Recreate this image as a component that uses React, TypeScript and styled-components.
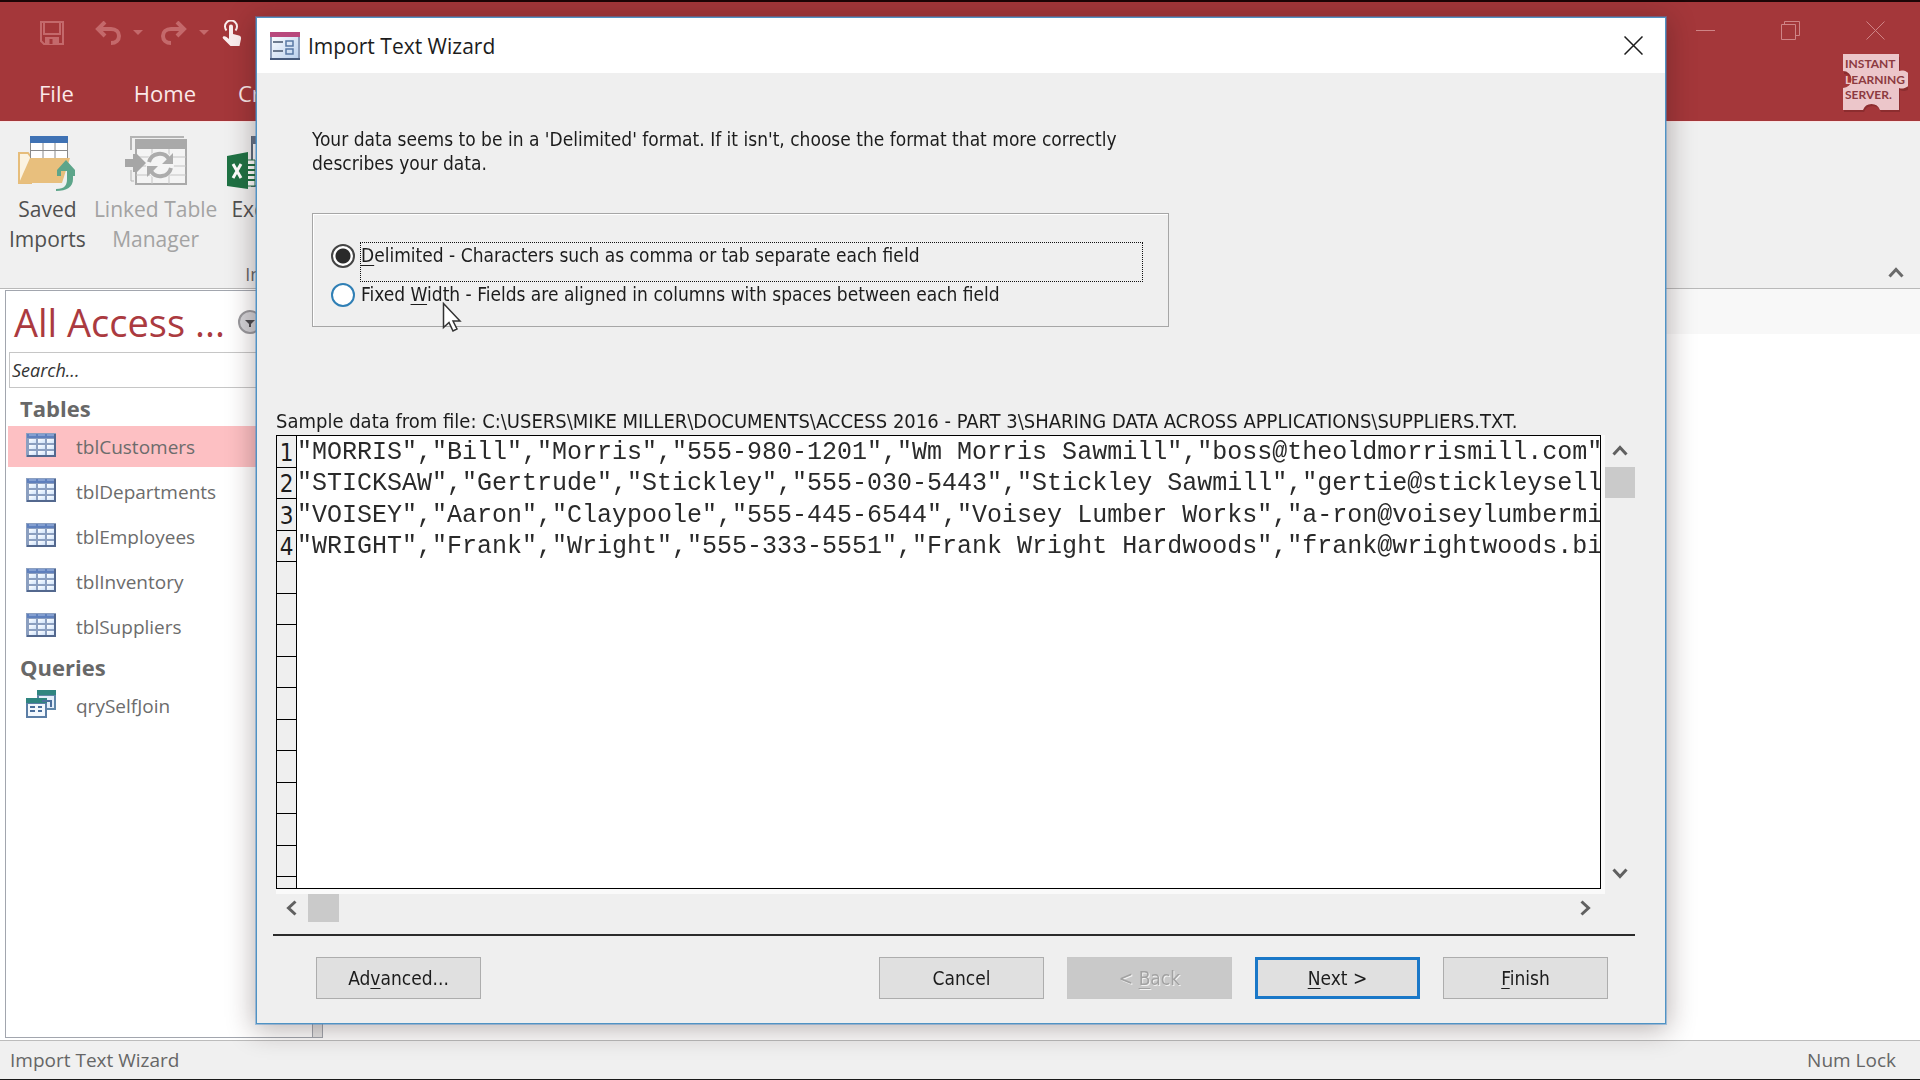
import React, { useState } from "react";
import styled, { createGlobalStyle } from "styled-components";

const red = "#a4373a";
const face = "#efefef";
const segoe = `"Open Sans", "Noto Sans", sans-serif`;
const tahoma = `"DejaVu Sans Condensed", "Noto Sans", sans-serif`;
const courier = `"Liberation Mono", monospace`;

const GlobalStyle = createGlobalStyle`
  *, *::before, *::after { box-sizing: border-box; }
  body { margin: 0; font-family: ${segoe}; font-size: 19px; color: #444; background: #fff; }
  button, input { font: inherit; color: inherit; }
  button { padding: 0; border: 0; background: none; }
  svg { display: block; flex: none; }
`;

/* ---------- application shell ---------- */

const Shell = styled.div`
  display: flex;
  flex-direction: column;
  height: 100vh;
  overflow: hidden;
  border-top: 2px solid #1c0506;
  border-bottom: 1px solid #1a1a1a;
`;

const Header = styled.header`
  display: flex;
  justify-content: space-between;
  background: ${red};
  height: 119px;
  flex: none;
`;

const HeaderLeft = styled.div`
  display: flex;
  flex-direction: column;
  justify-content: space-between;
`;

const QuickAccess = styled.div`
  display: flex;
  align-items: center;
  padding: 18px 0 0 40px;
  color: #c4696b;
`;

const QuickButton = styled.button<{ $gap: number; $active?: boolean }>`
  margin-right: ${(p) => p.$gap}px;
  color: ${(p) => (p.$active ? "#fbeeee" : "inherit")};
`;

const TabStrip = styled.nav`
  display: flex;
  gap: 42px;
  padding-left: 39px;
`;

const Tab = styled.button<{ $file?: boolean }>`
  height: 56px;
  padding-right: ${(p) => (p.$file ? 18 : 0)}px;
  font-size: 22px;
  line-height: 56px;
  color: #fbe9e9;
`;

const HeaderRight = styled.div`
  display: flex;
  flex-direction: column;
  align-items: flex-end;
  gap: 13px;
  padding: 19px 12px 0 0;
`;

const WindowButtons = styled.div`
  display: flex;
  gap: 66px;
  padding-right: 23px;
  color: #cf8486;
`;

const Ribbon = styled.section`
  display: flex;
  justify-content: space-between;
  height: 168px;
  flex: none;
  background: #f0f0f0;
  border-top: 1px solid #fbe6e6;
  border-bottom: 1px solid #b9b9b9;
`;

const RibbonGroup = styled.div`
  display: flex;
  padding: 14px 0 0 9px;
  gap: 8px;
`;

const RibbonButton = styled.button<{ $off?: boolean }>`
  display: flex;
  flex-direction: column;
  align-items: center;
  justify-content: flex-start;
  gap: 3px;
  font-size: 21px;
  line-height: 30px;
  color: ${(p) => (p.$off ? "#a3a3a3" : "#505050")};
`;

const ExportColumn = styled.div`
  display: flex;
  flex-direction: column;
  align-items: flex-start;
  justify-content: space-between;
  padding-left: 2px;
`;

const GroupLabel = styled.span`
  padding-left: 18px;
  font-size: 18px;
  line-height: 28px;
  color: #666;
`;

const CollapseButton = styled.button`
  align-self: flex-end;
  padding: 0 16px 7px 0;
  color: #6a6a6a;
`;

/* ---------- navigation pane ---------- */

const Workspace = styled.div`
  display: flex;
  flex: 1;
  min-height: 0;
`;

const Pane = styled.aside`
  display: flex;
  flex-direction: column;
  width: 308px;
  margin: 1px 0 2px 5px;
  border: 1px solid #a2a6ae;
  background: #fff;
`;

const PaneHead = styled.div`
  display: flex;
  align-items: center;
  justify-content: space-between;
  height: 61px;
  padding: 0 49px 0 8px;
`;

const PaneTitle = styled.h1`
  margin: 0;
  font-size: 38px;
  line-height: 60px;
  font-weight: 400;
  color: #ab3a40;
`;

const Search = styled.input`
  height: 36px;
  margin: 0 4px 0 3px;
  padding: 0 2px;
  border: 1px solid #c6c6c6;
  font-size: 18px;
  font-style: italic;
  &::placeholder { color: #333; opacity: 1; }
`;

const GroupTitle = styled.h2`
  margin: 0;
  padding: 3px 0 0 14px;
  height: 38px;
  font-size: 22px;
  line-height: 34px;
  font-weight: 700;
  color: #686868;
`;

const ObjectList = styled.ul`
  display: flex;
  flex-direction: column;
  gap: 4px;
  margin: 0;
  padding: 0 2px;
  list-style: none;
`;

const ObjectItem = styled.button<{ $selected?: boolean }>`
  display: flex;
  align-items: center;
  gap: 20px;
  width: 100%;
  height: 41px;
  padding-left: 18px;
  color: #6c6c6c;
  background: ${(p) => (p.$selected ? "#fdc0c3" : "transparent")};
  svg { margin-bottom: 4px; }
`;

const Splitter = styled.div`
  width: 10px;
  margin: 1px 0 2px;
  background: #e6e6e6;
  border: 1px solid #a2a6ae;
  border-left: 0;
`;

const Documents = styled.main`
  flex: 1;
  background: linear-gradient(#f8f8f8 45px, #fff 45px);
`;

const StatusBar = styled.footer`
  display: flex;
  align-items: center;
  justify-content: space-between;
  height: 39px;
  flex: none;
  padding: 0 24px 0 10px;
  border-top: 1px solid #bcbcbc;
  background: #f0f0f0;
  color: #666;
`;

/* ---------- wizard dialog ---------- */

const Dialog = styled.section`
  position: fixed;
  inset: 17px 254px 56px 256px;
  display: flex;
  flex-direction: column;
  border: 1px solid #4f93c4;
  background: ${face};
  box-shadow: 0 0 0 1px rgba(80, 140, 200, 0.45), 0 4px 26px 2px rgba(40, 20, 20, 0.32);
  font-family: ${tahoma};
  font-size: 19px;
  line-height: 24px;
  color: #1c1c1c;
`;

const DialogTitle = styled.header`
  display: flex;
  align-items: center;
  gap: 8px;
  height: 55px;
  flex: none;
  padding: 0 22px 0 13px;
  background: #fff;
  font-family: ${segoe};
`;

const DialogName = styled.h2`
  flex: 1;
  margin: 0;
  font-size: 21px;
  font-weight: 400;
`;

const DialogBody = styled.div`
  display: flex;
  flex-direction: column;
  flex: 1;
  min-height: 0;
  padding: 54px 30px 24px 16px;
`;

const Intro = styled.p`
  max-width: 840px;
  margin: 0 0 38px 39px;
`;

const Options = styled.fieldset`
  width: 857px;
  max-width: 100%;
  height: 114px;
  margin: 0 0 82px 39px;
  padding: 28px 25px 0 18px;
  border: 1px solid #a6a6a6;
  box-shadow: inset 1px 1px 0 #fff;
`;

const Option = styled.div`
  display: flex;
  align-items: flex-start;
  gap: 5px;
  height: 39px;
`;

const Radio = styled.input`
  appearance: none;
  width: 24px;
  height: 24px;
  margin: 2px 0 0;
  border: 2px solid #2f7fb5;
  border-radius: 50%;
  background: #fff;
  &:checked {
    border-color: #444;
    background: radial-gradient(circle, #2a2a2a 0 7px, #fff 8px);
  }
`;

const OptionLabel = styled.label<{ $focused: boolean }>`
  flex: 1;
  height: 40px;
  border: 1px dotted ${(p) => (p.$focused ? "#111" : "transparent")};
`;

const Key = styled.u`
  text-decoration-thickness: 1px;
  text-underline-offset: 3px;
`;

const SampleLabel = styled.div`
  margin-left: 3px;
  padding-bottom: 2px;
  font-size: 20px;
  white-space: nowrap;
`;

const Preview = styled.div`
  display: grid;
  grid-template: minmax(0, 1fr) 28px / minmax(0, 1fr) 30px;
  flex: 1;
  min-height: 0;
  margin-left: 3px;
`;

const SheetFrame = styled.div`
  display: flex;
  min-height: 0;
  padding: 0 4px 5px 0;
  background: #fafafa;
`;

const Sheet = styled.div`
  flex: 1;
  min-width: 0;
  overflow: hidden;
  border: 1px solid #000;
  background: #fff;
`;

const Table = styled.table`
  width: 100%;
  table-layout: fixed;
  border-spacing: 0;
`;

const Row = styled.tr`
  height: 32px;
  &:nth-child(even) { height: 31px; }
`;

const RowNumber = styled.th`
  width: 20px;
  padding: 2px 0 0;
  border-right: 1px solid #000;
  border-bottom: 1px solid #000;
  background: ${face};
  font-size: 24px;
  line-height: 28px;
  font-weight: 400;
`;

const RowText = styled.td`
  padding: 1px 0 0;
  overflow: hidden;
  font-family: ${courier};
  font-size: 25px;
  line-height: 28px;
  white-space: pre;
  color: #2a2a2a;
`;

const ScrollBar = styled.div<{ $across?: boolean }>`
  display: flex;
  flex-direction: ${(p) => (p.$across ? "row" : "column")};
  padding: ${(p) => (p.$across ? "0 4px 0 0" : "0 0 5px")};
`;

const ScrollArrow = styled.button`
  display: grid;
  place-items: center;
  flex: 0 0 32px;
  color: #606060;
`;

const Thumb = styled.div`
  flex: 0 0 31px;
  background: #cacaca;
`;

const Track = styled.div`
  flex: 1;
`;

const Rule = styled.hr`
  width: 100%;
  height: 2px;
  margin: 12px 0 21px;
  border: 0;
  background: #2b2b2b;
`;

const Actions = styled.div`
  display: flex;
  justify-content: space-between;
  padding: 0 27px 0 43px;
`;

const ActionGroup = styled.div`
  display: flex;
  gap: 23px;
`;

const ActionButton = styled.button<{ $primary?: boolean }>`
  width: 165px;
  height: 42px;
  border: ${(p) => (p.$primary ? "3px solid #1a78c8" : "1px solid #adadad")};
  background: #e0e0e0;
  &:disabled {
    border-color: #c8c8c8;
    background: #c9c9c9;
    color: #a2a2a2;
    text-shadow: 1px 1px 0 #f2f2f2;
  }
`;

const Pointer = styled.div`
  position: fixed;
  left: 442px;
  top: 302px;
  pointer-events: none;
`;

/* ---------- drawings ---------- */

const SaveIcon = () => (
  <svg width="24" height="24" viewBox="0 0 24 24" fill="none" stroke="currentColor" strokeWidth="2">
    <path d="M1 1h22v22H4l-3-3z" />
    <path d="M4 2v11h16V2" />
    <path d="M6 23v-6h12v6z" fill="currentColor" />
    <path d="M11 18v5" stroke={red} strokeWidth="3" />
  </svg>
);

const UndoIcon = ({ flip }: { flip?: boolean }) => (
  <svg width="27" height="24" viewBox="0 0 27 24" fill="none" stroke="currentColor" strokeWidth="4">
    <g transform={flip ? "matrix(-1 0 0 1 27 0)" : undefined}>
      <path d="M10 1 3 8l7 7M3 8h13c5 0 8 3 8 7 0 4-3 7-8 7" />
    </g>
  </svg>
);

const CaretIcon = () => (
  <svg width="10" height="6" viewBox="0 0 10 6" fill="currentColor">
    <path d="M0 0h10L5 5z" />
  </svg>
);

const TouchIcon = () => (
  <svg width="20" height="26" viewBox="0 0 20 26" fill="currentColor">
    <path d="M4.500 10.500A6 6 0 1 1 13.500 10.500" fill="none" stroke="currentColor" strokeWidth="2" />
    <path d="M7 6.500a2 2 0 0 1 4 0V14l6 1.500q2.500.8 2 3.500l-1.500 7H8.500L1 18.500q-1-1.500.5-2.200 1.500-.5 3 .7L7 19z" />
  </svg>
);

const MinimizeIcon = () => (
  <svg width="19" height="19" viewBox="0 0 19 19" stroke="currentColor"><path d="M0 9.500h19" /></svg>
);

const RestoreIcon = () => (
  <svg width="19" height="19" viewBox="0 0 19 19" fill="none" stroke="currentColor">
    <path d="M.5 3.500h14v15H.5zM3.500 3V.5h15v14H15" />
  </svg>
);

const CloseIcon = ({ weight = 1 }: { weight?: number }) => (
  <svg width="19" height="19" viewBox="0 0 19 19" fill="none" stroke="currentColor" strokeWidth={weight}>
    <path d="m.5.5 18 18M18.500.5l-18 18" />
  </svg>
);

const Logo = () => (
  <svg width="69" height="62" viewBox="0 0 69 62" fontFamily="Lato, sans-serif" fontSize="12" fontWeight="700" fill="#8c3a40">
    <path
      d="M4 2h56v17a9 9 0 1 1 0 16v22H41a9 9 0 0 0-17 0H4V36a8.500 8.500 0 0 0 0-17z"
      fill="#6f2124"
      opacity=".45"
      transform="translate(1 2)"
    />
    <path d="M4 1h56v17a9 9 0 1 1 0 17v22H41a9 9 0 0 0-17 0H4V35a8.500 8.500 0 0 0 0-17z" fill="#ecc6ca" />
    <text x="6" y="15">INSTANT</text>
    <text x="6" y="31"><tspan fill="#ecc6ca">L</tspan>EARNING</text>
    <text x="6" y="46">SERVER.</text>
  </svg>
);

const SavedImportsIcon = () => (
  <svg width="58" height="55" viewBox="0 0 58 55">
    <path d="M1 17h9l3 4v26H1z" fill="#fbf3e2" stroke="#e6bd7b" strokeWidth="2" />
    <path d="M12 1h38v24H12z" fill="#fff" />
    <path d="M12 0h38v7H12z" fill="#3f72b4" />
    <path d="M12.500 7v17M25 7v17M37 7v17M49.500 7v17M12 14.500h38" stroke="#8a8a8a" fill="none" />
    <path d="M12 22h40L44 47H1z" fill="#e8bf7d" />
    <path d="M38 53c9 0 11-4 11-10V35h-6v5h-4v-6l9-10 9 10v6h-3v-4h1v7c0 8-6 12-17 12z" fill="#5da58a" />
  </svg>
);

const LinkedTableIcon = () => (
  <svg width="62" height="55" viewBox="0 0 62 55" fill="none">
    <path d="M6 14V1h53" stroke="#b4b4b4" strokeWidth="2" />
    <path d="M6 34v11h3" stroke="#b4b4b4" />
    <path d="M11 4h50v44H11z" fill="#f4f4f4" stroke="#aaa" strokeWidth="2" />
    <path d="M10 4h52v9H10z" fill="#a9a9a9" />
    <path d="M11 21h50M11 30h50M11 39h50M27 13v35M44 13v35" stroke="#c4c4c4" />
    <path d="M0 23h8v-5h4l9 9-9 9H8v-5H0z" fill="#a6a6a6" />
    <circle cx="35" cy="29" r="14" fill="#f4f4f4" />
    <path d="M24 26a11 11 0 0 1 20-3M46 32a11 11 0 0 1-20 3" stroke="#acacac" strokeWidth="4" />
    <path d="M48 17v11H37zM22 41V30h11z" fill="#acacac" />
  </svg>
);

const ExcelIcon = () => (
  <svg width="58" height="55" viewBox="0 0 58 55">
    <path d="M25 0h30v50H25z" fill="#fff" stroke="#5d6b7d" strokeWidth="2" />
    <path d="M25 0h30v8H25z" fill="#66758a" />
    <path d="M20 24h8v26h-8z" fill="#fff" stroke="#1f7244" />
    <path d="M20 29h8M20 34h8M20 39h8M20 44h8" stroke="#1f7244" strokeWidth="2" />
    <path d="m0 20 21-4v37L0 50z" fill="#1f7244" />
    <path d="m6 28 8 14M14 28 6 42" stroke="#fff" strokeWidth="3" />
  </svg>
);

const TableIcon = () => (
  <svg width="30" height="24" viewBox="0 0 30 24">
    <defs>
      <linearGradient id="cells" x2="1" y2="1">
        <stop offset="0" stopColor="#fff" />
        <stop offset="1" stopColor="#cfe3fb" />
      </linearGradient>
    </defs>
    <path d="M0 0h30v24H0z" fill="#8b9fc0" />
    <path d="M1 1h28v4H1z" fill="#5f80bd" />
    <path d="M3 2h7M12 2h7M21 2h7" stroke="#a9bfe4" />
    {[6, 12, 18].map((y) =>
      [3, 12, 21].map((x) => <rect key={`${x}-${y}`} x={x} y={y} width="7" height="4" fill="url(#cells)" />)
    )}
    <path d="M29 1v22H1" fill="none" stroke="#53688e" strokeWidth="2" />
  </svg>
);

const QueryIcon = () => (
  <svg width="30" height="28" viewBox="0 0 30 28">
    <path d="M11 0h19v20H11z" fill="#5f86a8" />
    <path d="M11 0h19v5H11z" fill="#2f8580" />
    <path d="M13 6h15v12H13z" fill="#e3eefa" />
    <path d="M0 8h21v20H0z" fill="#5b7ea6" />
    <path d="M0 8h21v5H0z" fill="#2f8580" />
    <path d="M2 14h17v12H2z" fill="#f3f8fd" />
    <path d="M4 17h5M4 21h5M12 17h4M12 21h4M16 11h9v6" stroke="#4b6f9c" strokeWidth="2" fill="none" />
  </svg>
);

const FormIcon = () => (
  <svg width="30" height="28" viewBox="0 0 30 28" fill="none">
    <defs>
      <linearGradient id="form" x2="1" y2="1">
        <stop offset="0" stopColor="#fff" />
        <stop offset="1" stopColor="#b9d0ee" />
      </linearGradient>
    </defs>
    <path d="M1 1h28v26H1z" fill="url(#form)" stroke="#8a9bb8" strokeWidth="2" />
    <path d="M0 0h30v5H0z" fill="#b8487c" />
    <path d="M0 26h30v2H0z" fill="#465a7c" />
    <path d="M3 10h10M3 19h10" stroke="#44546c" strokeWidth="1.500" />
    <path d="M16 9h7v5h-7zM16 17h7v5h-7z" stroke="#5878a4" strokeWidth="1.500" />
  </svg>
);

const PaneMenuIcon = () => (
  <svg width="26" height="26" viewBox="0 0 26 26">
    <circle cx="13" cy="13" r="11" fill="#d4d4d8" stroke="#9a9a9e" strokeWidth="2" />
    <path d="M8 11h10l-4 4v3h-2v-3z" fill="#4c4c50" />
  </svg>
);

const turns = { up: 0, right: 90, down: 180, left: 270 };

const Chevron = ({ to }: { to: keyof typeof turns }) => (
  <svg width="16" height="16" viewBox="0 0 16 16" fill="none" stroke="currentColor" strokeWidth="3">
    <path d="m1.500 11.500 6.500-7 6.500 7" transform={`rotate(${turns[to]} 8 8)`} />
  </svg>
);

const ArrowPointer = () => (
  <svg width="20" height="31" viewBox="0 0 20 31">
    <path d="M1.500 1.500v24l5.500-5 4 8.500 4-2-4-8h7z" fill="#fff" stroke="#333" strokeWidth="1.500" />
  </svg>
);

/* ---------- content ---------- */

const tables = ["tblCustomers", "tblDepartments", "tblEmployees", "tblInventory", "tblSuppliers"];

const lines = [
  `"MORRIS","Bill","Morris","555-980-1201","Wm Morris Sawmill","boss@theoldmorrismill.com"`,
  `"STICKSAW","Gertrude","Stickley","555-030-5443","Stickley Sawmill","gertie@stickleysell`,
  `"VOISEY","Aaron","Claypoole","555-445-6544","Voisey Lumber Works","a-ron@voiseylumbermi`,
  `"WRIGHT","Frank","Wright","555-333-5551","Frank Wright Hardwoods","frank@wrightwoods.bi`,
];

const rows = Array.from({ length: 15 }, (_, i) => lines[i] ?? "");

function NavigationPane() {
  return (
    <Pane>
      <PaneHead>
        <PaneTitle>All Access ...</PaneTitle>
        <button aria-label="Pane menu"><PaneMenuIcon /></button>
      </PaneHead>
      <Search aria-label="Search" placeholder="Search..." />
      <GroupTitle>Tables</GroupTitle>
      <ObjectList>
        {tables.map((name, i) => (
          <li key={name}>
            <ObjectItem $selected={i === 0}><TableIcon />{name}</ObjectItem>
          </li>
        ))}
      </ObjectList>
      <GroupTitle>Queries</GroupTitle>
      <ObjectList>
        <li><ObjectItem><QueryIcon />qrySelfJoin</ObjectItem></li>
      </ObjectList>
    </Pane>
  );
}

function ImportWizard() {
  const [format, setFormat] = useState("delimited");
  return (
    <Dialog role="dialog" aria-labelledby="wizard-name">
      <DialogTitle>
        <FormIcon />
        <DialogName id="wizard-name">Import Text Wizard</DialogName>
        <button aria-label="Close wizard"><CloseIcon weight={1.5} /></button>
      </DialogTitle>
      <DialogBody>
        <Intro>
          Your data seems to be in a 'Delimited' format. If it isn't, choose the format that more correctly
          describes your data.
        </Intro>
        <Options aria-label="Data format">
          <Option>
            <Radio
              type="radio"
              name="format"
              id="delimited"
              checked={format === "delimited"}
              onChange={() => setFormat("delimited")}
            />
            <OptionLabel htmlFor="delimited" $focused={format === "delimited"}>
              <Key>D</Key>elimited - Characters such as comma or tab separate each field
            </OptionLabel>
          </Option>
          <Option>
            <Radio
              type="radio"
              name="format"
              id="fixed"
              checked={format === "fixed"}
              onChange={() => setFormat("fixed")}
            />
            <OptionLabel htmlFor="fixed" $focused={format === "fixed"}>
              Fixed <Key>W</Key>idth - Fields are aligned in columns with spaces between each field
            </OptionLabel>
          </Option>
        </Options>
        <SampleLabel>
          Sample data from file: C:\USERS\MIKE MILLER\DOCUMENTS\ACCESS 2016 - PART 3\SHARING DATA ACROSS
          APPLICATIONS\SUPPLIERS.TXT.
        </SampleLabel>
        <Preview>
          <SheetFrame>
            <Sheet>
              <Table>
                <tbody>
                  {rows.map((text, i) => (
                    <Row key={i}>
                      <RowNumber scope="row">{text ? i + 1 : ""}</RowNumber>
                      <RowText>{text}</RowText>
                    </Row>
                  ))}
                </tbody>
              </Table>
            </Sheet>
          </SheetFrame>
          <ScrollBar>
            <ScrollArrow aria-label="Scroll up"><Chevron to="up" /></ScrollArrow>
            <Thumb />
            <Track />
            <ScrollArrow aria-label="Scroll down"><Chevron to="down" /></ScrollArrow>
          </ScrollBar>
          <ScrollBar $across>
            <ScrollArrow aria-label="Scroll left"><Chevron to="left" /></ScrollArrow>
            <Thumb />
            <Track />
            <ScrollArrow aria-label="Scroll right"><Chevron to="right" /></ScrollArrow>
          </ScrollBar>
        </Preview>
        <Rule />
        <Actions>
          <ActionButton>Ad<Key>v</Key>anced...</ActionButton>
          <ActionGroup>
            <ActionButton>Cancel</ActionButton>
            <ActionButton disabled>&lt; <Key>B</Key>ack</ActionButton>
            <ActionButton $primary><Key>N</Key>ext &gt;</ActionButton>
            <ActionButton><Key>F</Key>inish</ActionButton>
          </ActionGroup>
        </Actions>
      </DialogBody>
    </Dialog>
  );
}

export default function App() {
  return (
    <>
      <GlobalStyle />
      <Shell>
        <Header>
          <HeaderLeft>
            <QuickAccess>
              <QuickButton $gap={31} aria-label="Save"><SaveIcon /></QuickButton>
              <QuickButton $gap={11} aria-label="Undo"><UndoIcon /></QuickButton>
              <QuickButton $gap={17} aria-label="Undo history"><CaretIcon /></QuickButton>
              <QuickButton $gap={12} aria-label="Redo"><UndoIcon flip /></QuickButton>
              <QuickButton $gap={13} aria-label="Redo history"><CaretIcon /></QuickButton>
              <QuickButton $gap={0} $active aria-label="Touch mode"><TouchIcon /></QuickButton>
            </QuickAccess>
            <TabStrip>
              <Tab $file>File</Tab>
              <Tab>Home</Tab>
              <Tab>Create</Tab>
            </TabStrip>
          </HeaderLeft>
          <HeaderRight>
            <WindowButtons>
              <button aria-label="Minimize"><MinimizeIcon /></button>
              <button aria-label="Restore"><RestoreIcon /></button>
              <button aria-label="Close"><CloseIcon /></button>
            </WindowButtons>
            <Logo />
          </HeaderRight>
        </Header>
        <Ribbon>
          <RibbonGroup>
            <RibbonButton><SavedImportsIcon /><span>Saved<br />Imports</span></RibbonButton>
            <RibbonButton $off><LinkedTableIcon /><span>Linked Table<br />Manager</span></RibbonButton>
            <ExportColumn>
              <RibbonButton><ExcelIcon /><span>Excel</span></RibbonButton>
              <GroupLabel>Import</GroupLabel>
            </ExportColumn>
          </RibbonGroup>
          <CollapseButton aria-label="Collapse the ribbon"><Chevron to="up" /></CollapseButton>
        </Ribbon>
        <Workspace>
          <NavigationPane />
          <Splitter />
          <Documents />
        </Workspace>
        <StatusBar>
          <span>Import Text Wizard</span>
          <span>Num Lock</span>
        </StatusBar>
      </Shell>
      <ImportWizard />
      <Pointer><ArrowPointer /></Pointer>
    </>
  );
}
